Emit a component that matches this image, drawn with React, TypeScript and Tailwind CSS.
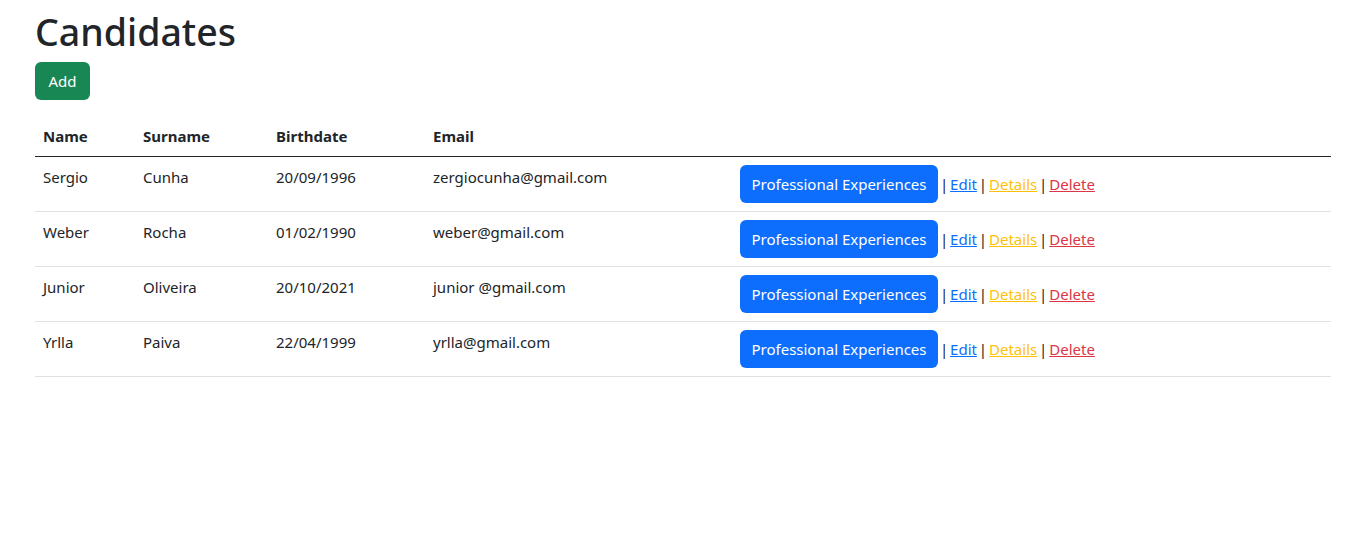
const candidates = [
  { name: 'Sergio', surname: 'Cunha', birthdate: '20/09/1996', email: 'zergiocunha@gmail.com' },
  { name: 'Weber', surname: 'Rocha', birthdate: '01/02/1990', email: 'weber@gmail.com' },
  { name: 'Junior', surname: 'Oliveira', birthdate: '20/10/2021', email: 'junior @gmail.com' },
  { name: 'Yrlla', surname: 'Paiva', birthdate: '22/04/1999', email: 'yrlla@gmail.com' },
];

export default function App() {
  return (
    <div className="min-h-screen bg-white text-[#212529] text-[15px] leading-6 [font-family:'Noto_Sans','Open_Sans',sans-serif]">
      <div className="pl-[35px] pr-[27px] pt-[8px]">
        <h1 className="text-[37.5px] leading-[48px] font-medium mb-[6px]">Candidates</h1>
        <button className="bg-[#198754] text-white rounded-[6px] h-[38px] w-[55px]">Add</button>

        <table className="w-full mt-[16px] border-collapse">
          <thead>
            <tr className="border-b border-[#212529] text-left">
              <th className="w-[100px] px-[8px] py-[8px] font-bold">Name</th>
              <th className="w-[133px] px-[8px] py-[8px] font-bold">Surname</th>
              <th className="w-[157px] px-[8px] py-[8px] font-bold">Birthdate</th>
              <th className="w-[307px] px-[8px] py-[8px] font-bold">Email</th>
              <th className="px-[8px] py-[8px]"></th>
            </tr>
          </thead>
          <tbody>
            {candidates.map((c) => (
              <tr key={c.name} className="border-b border-[#dee2e6] align-top">
                <td className="px-[8px] py-[8px]">{c.name}</td>
                <td className="px-[8px] py-[8px]">{c.surname}</td>
                <td className="px-[8px] py-[8px]">{c.birthdate}</td>
                <td className="px-[8px] py-[8px]">{c.email}</td>
                <td className="px-[8px] py-[8px] whitespace-nowrap [word-spacing:-2px]">
                  <button className="inline-block align-baseline bg-[#0d6efd] text-white rounded-[6px] py-[7px] leading-6 w-[198px] [word-spacing:0]">
                    Professional Experiences
                  </button>{' '}
                  |{' '}
                  <a href="#" className="text-[#0d6efd] underline">Edit</a> |{' '}
                  <a href="#" className="text-[#ffc107] underline">Details</a> |{' '}
                  <a href="#" className="text-[#dc3545] underline">Delete</a>
                </td>
              </tr>
            ))}
          </tbody>
        </table>
      </div>
    </div>
  );
}
